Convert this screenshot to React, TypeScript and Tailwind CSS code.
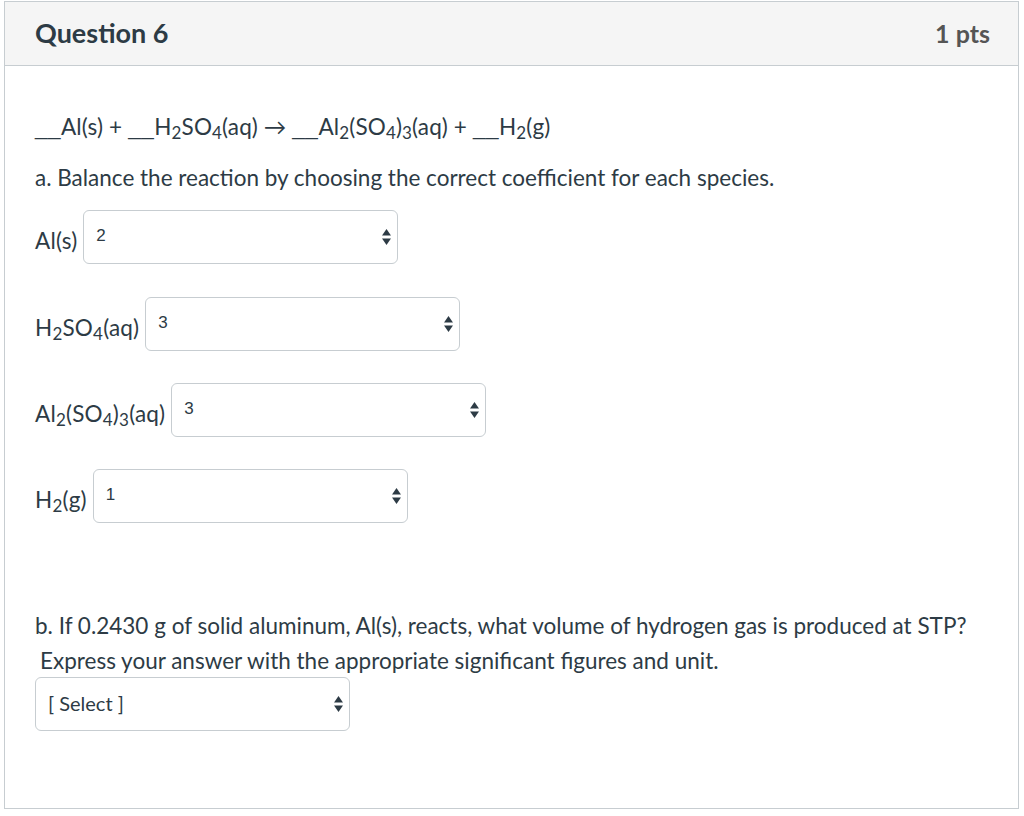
import React from "react";

function Arrows() {
  return (
    <svg width="9" height="16" viewBox="0 0 9 16" className="shrink-0">
      <path d="M4.5 0 L9 6.5 L0 6.5 Z" fill="#2d3b45" />
      <path d="M0 9.5 L9 9.5 L4.5 16 Z" fill="#2d3b45" />
    </svg>
  );
}

function SelectBox({ value, lato }: { value: string; lato?: boolean }) {
  return (
    <div className="w-[315px] h-[54px] border border-[#c7cdd1] rounded-[6px] bg-white flex items-center justify-between pl-[12px] pr-[6px] shrink-0">
      <span
        className={
          lato
            ? "text-[20px] text-[#2d3b45] font-['Lato',sans-serif] -mt-[2px]"
            : "text-[17px] text-[#2d3b45] font-['Liberation_Sans',Arial,sans-serif] -mt-[2px]"
        }
      >
        {value}
      </span>
      <Arrows />
    </div>
  );
}

function Row({ label, value, mt }: { label: React.ReactNode; value: string; mt: string }) {
  return (
    <div className={`flex items-center ${mt}`}>
      <span className="pt-[8px] mr-[6px] whitespace-nowrap tracking-[0.2px]">{label}</span>
      <SelectBox value={value} />
    </div>
  );
}

const Sub = ({ children }: { children: React.ReactNode }) => (
  <span className="text-[17px] align-[-4px] leading-none">{children}</span>
);

const Blank = () => (
  <span className="font-['Liberation_Sans',Arial,sans-serif] tracking-[0.5px]">__</span>
);

export default function App() {
  return (
    <div className="w-[1024px] h-[816px] bg-white font-['Lato','Noto_Sans',sans-serif] text-[#2d3b45] pt-[1px] pl-[4px]">
      <div className="w-[1015px] h-[808px] border border-[#c7cdd1] flex flex-col">
        <div className="h-[64px] bg-[#f5f5f5] border-b border-[#c7cdd1] flex items-center justify-between pl-[30px] pr-[28px] shrink-0">
          <span className="text-[27px] font-bold text-[#2d3b45]">Question 6</span>
          <span className="text-[25px] font-bold text-[#555555]">1 pts</span>
        </div>
        <div className="pl-[30px] pt-[46px] text-[22.5px]">
          <div className="leading-[30px] whitespace-nowrap tracking-[0.15px]">
            <Blank />Al(s) + <Blank />H<Sub>2</Sub>SO<Sub>4</Sub>(aq) → <Blank />Al<Sub>2</Sub>(SO<Sub>4</Sub>)<Sub>3</Sub>(aq) + <Blank />H<Sub>2</Sub>(g)
          </div>
          <div className="leading-[30px] mt-[20px]">
            a. Balance the reaction by choosing the correct coefficient for each species.
          </div>
          <Row label="Al(s)" value="2" mt="mt-[17px]" />
          <Row
            label={<>H<Sub>2</Sub>SO<Sub>4</Sub>(aq)</>}
            value="3"
            mt="mt-[33px]"
          />
          <Row
            label={<>Al<Sub>2</Sub>(SO<Sub>4</Sub>)<Sub>3</Sub>(aq)</>}
            value="3"
            mt="mt-[32px]"
          />
          <Row label={<>H<Sub>2</Sub>(g)</>} value="1" mt="mt-[32px]" />
          <div className="leading-[35px] mt-[85px] whitespace-nowrap">
            b. If 0.2430 g of solid aluminum, Al(s), reacts, what volume of hydrogen gas is produced at STP?
          </div>
          <div className="leading-[35px] pl-[5px] whitespace-nowrap">
            Express your answer with the appropriate significant figures and unit.
          </div>
          <div className="-mt-[1px]">
            <SelectBox value="[ Select ]" lato />
          </div>
        </div>
      </div>
    </div>
  );
}
